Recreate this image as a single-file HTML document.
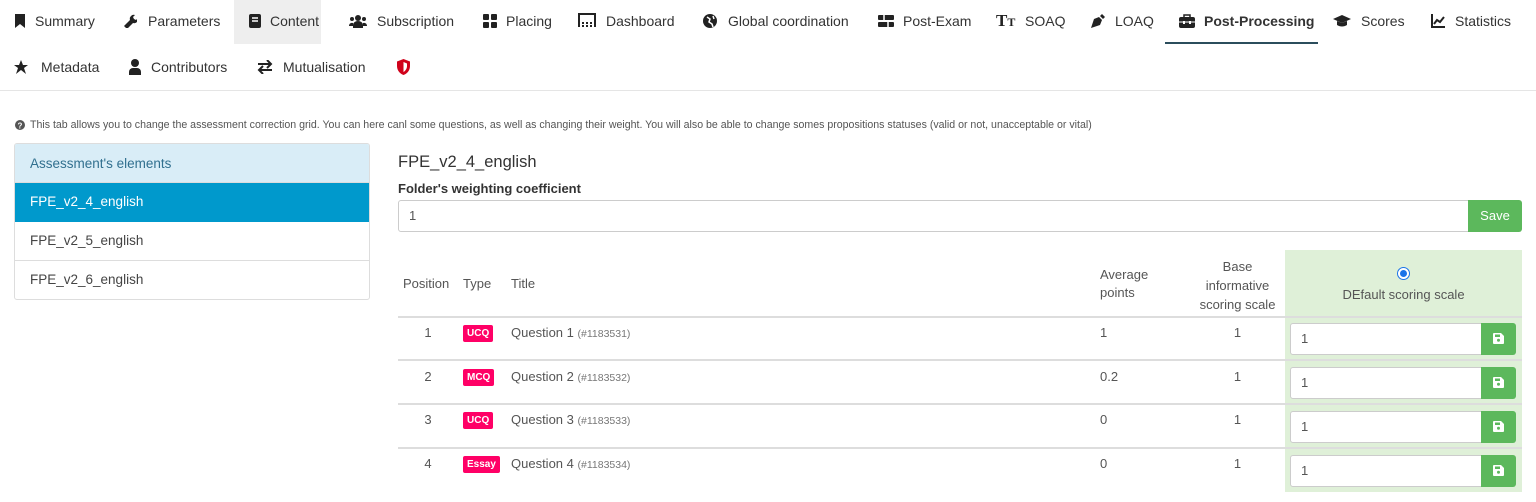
<!DOCTYPE html>
<html><head><meta charset="utf-8"><style>
*{box-sizing:border-box;margin:0;padding:0}
body{width:1536px;height:502px;overflow:hidden;background:#fff;font-family:"Liberation Sans",sans-serif;color:#333;font-size:14px;position:relative}
.a{position:absolute;white-space:nowrap}
.nav{color:#333;font-size:14px}
.ic{position:absolute;width:14px;height:14px}
.badge{position:absolute;background:#f06;color:#fff;font-size:10px;font-weight:bold;border-radius:2px;padding:2px 4px;line-height:13px}
.inp{position:absolute;border:1px solid #ccc;border-radius:3px;background:#fff;font-size:13px;color:#555;padding-left:10px}
.gb{position:absolute;background:#5cb85c;border-radius:0 3px 3px 0}
.hl{position:absolute;height:2px;background:#ddd;left:398px;width:1124px}
</style></head><body>
<div class="a" style="left:234px;top:0;width:87px;height:44px;background:#eee"></div>
<div class="a" style="left:1165px;top:42px;width:153px;height:2px;background:#2b4d5c"></div>
<div class="a" style="left:0;top:90px;width:1536px;height:1px;background:#e5e5e5"></div>
<svg class="ic" style="left:13px;top:14px" viewBox="0 0 14 14"><path d="M2 0h10v14l-5-4-5 4z" fill="#222"/></svg>
<div class="a nav" style="left:35px;top:13px">Summary</div>
<svg class="ic" style="left:123px;top:14px" viewBox="0 0 14 14"><path d="M1 12l6-6a4 4 0 015-5l-2 2 1 2 2 1 2-2a4 4 0 01-5 5l-6 6z" fill="#222"/></svg>
<div class="a nav" style="left:148px;top:13px">Parameters</div>
<svg class="ic" style="left:248px;top:14px" viewBox="0 0 14 14"><rect x="1" y="0" width="12" height="14" rx="2" fill="#222"/><path d="M4 4h6M4 7h6" stroke="#fff" stroke-width="1.5"/></svg>
<div class="a nav" style="left:270px;top:13px">Content</div>
<svg class="ic" style="left:349px;top:14px;width:18px" viewBox="0 0 18 14"><circle cx="9" cy="4" r="3" fill="#222"/><circle cx="3" cy="5" r="2" fill="#222"/><circle cx="15" cy="5" r="2" fill="#222"/><path d="M4 14v-3a5 4 0 0110 0v3zM0 12a3 3 0 014-3v3zM18 12a3 3 0 00-4-3v3z" fill="#222"/></svg>
<div class="a nav" style="left:377px;top:13px">Subscription</div>
<svg class="ic" style="left:483px;top:14px" viewBox="0 0 14 14"><rect x="0" y="0" width="6" height="6" rx="1" fill="#222"/><rect x="8" y="0" width="6" height="6" rx="1" fill="#222"/><rect x="0" y="8" width="6" height="6" rx="1" fill="#222"/><rect x="8" y="8" width="6" height="6" rx="1" fill="#222"/></svg>
<div class="a nav" style="left:506px;top:13px">Placing</div>
<svg class="ic" style="left:578px;top:13px;width:18px;height:16px" viewBox="0 0 18 16"><path d="M1 14V1h16v13" fill="none" stroke="#222" stroke-width="2"/><path d="M4 13h2M8 13h2M12 13h2M4 10h2M8 10h2M12 10h2" stroke="#222" stroke-width="2"/></svg>
<div class="a nav" style="left:606px;top:13px">Dashboard</div>
<svg class="ic" style="left:703px;top:14px" viewBox="0 0 14 14"><circle cx="7" cy="7" r="7" fill="#222"/><path d="M4 3l3 2-1 3 3 2 1 3M10 2l1 3" stroke="#fff" stroke-width="1.5" fill="none"/></svg>
<div class="a nav" style="left:728px;top:13px">Global coordination</div>
<svg class="ic" style="left:878px;top:14px;width:16px" viewBox="0 0 16 14"><rect x="0" y="1" width="16" height="5" rx="1" fill="#222"/><rect x="0" y="8" width="16" height="5" rx="1" fill="#222"/><path d="M6 1v5M10 8v5" stroke="#fff" stroke-width="1.5"/></svg>
<div class="a nav" style="left:903px;top:13px">Post-Exam</div>
<div class="a" style="left:996px;top:11px;font-family:'Liberation Serif',serif;font-size:17px;color:#222;font-weight:bold">T<span style="font-size:12px">T</span></div>
<div class="a nav" style="left:1025px;top:13px">SOAQ</div>
<svg class="ic" style="left:1090px;top:13px;width:16px;height:16px" viewBox="0 0 16 16"><path d="M1 15l3-9 5-2 3 3-2 5z" fill="#222"/><path d="M10 3l2-2 3 3-2 2z" fill="#222"/></svg>
<div class="a nav" style="left:1115px;top:13px">LOAQ</div>
<svg class="ic" style="left:1179px;top:14px;width:16px" viewBox="0 0 16 14"><path d="M5 3V1h6v2" stroke="#222" stroke-width="1.5" fill="none"/><rect x="0" y="3" width="16" height="11" rx="2" fill="#222"/><path d="M0 8h16" stroke="#fff"/><rect x="4" y="7" width="2" height="3" fill="#fff"/><rect x="10" y="7" width="2" height="3" fill="#fff"/></svg>
<div class="a nav" style="left:1204px;top:13px;font-weight:bold">Post-Processing</div>
<svg class="ic" style="left:1333px;top:14px;width:18px" viewBox="0 0 18 14"><path d="M0 5l9-4 9 4-9 4z" fill="#222"/><path d="M4 7v4c3 2 7 2 10 0V7l-5 2z" fill="#222"/></svg>
<div class="a nav" style="left:1361px;top:13px">Scores</div>
<svg class="ic" style="left:1431px;top:14px" viewBox="0 0 14 14"><path d="M1 0v13h13" stroke="#222" stroke-width="2" fill="none"/><path d="M3 10l3-4 3 2 4-5" stroke="#222" stroke-width="2" fill="none"/></svg>
<div class="a nav" style="left:1455px;top:13px">Statistics</div>
<svg class="ic" style="left:14px;top:60px" viewBox="0 0 14 14"><path d="M7 0l2 5h5l-4 3 2 6-5-4-5 4 2-6-4-3h5z" fill="#222"/></svg>
<div class="a nav" style="left:41px;top:59px">Metadata</div>
<svg class="ic" style="left:128px;top:59px;width:14px;height:16px" viewBox="0 0 14 16"><circle cx="7" cy="4" r="4" fill="#222"/><path d="M1 16v-3a4 4 0 014-4h4a4 4 0 014 4v3z" fill="#222"/></svg>
<div class="a nav" style="left:151px;top:59px">Contributors</div>
<svg class="ic" style="left:257px;top:60px;width:16px" viewBox="0 0 16 14"><path d="M1 4h13M10 0l4 4-4 4M15 10H2M6 6l-4 4 4 4" stroke="#222" stroke-width="2" fill="none"/></svg>
<div class="a nav" style="left:283px;top:59px">Mutualisation</div>
<svg class="ic" style="left:397px;top:59px;width:13px;height:16px" viewBox="0 0 13 16"><path d="M6.5 0L13 2.5V7c0 5-3.5 8-6.5 9C3.5 15 0 12 0 7V2.5z" fill="#d0021b"/><path d="M6.5 3L10 4.5V7c0 3-2 5-3.5 6z" fill="#fff"/></svg>
<svg class="ic" style="left:15px;top:120px;width:10px;height:10px" viewBox="0 0 10 10"><circle cx="5" cy="5" r="5" fill="#555"/><text x="5" y="8.3" font-size="8" fill="#fff" text-anchor="middle" font-family="Liberation Sans" font-weight="bold">?</text></svg>
<div class="a" style="left:30px;top:119px;font-size:10.6px;color:#555">This tab allows you to change the assessment correction grid. You can here canl some questions, as well as changing their weight. You will also be able to change somes propositions statuses (valid or not, unacceptable or vital)</div>
<div class="a" style="left:14px;top:143px;width:356px;height:157px;border:1px solid #ddd;border-radius:3px;overflow:hidden">
<div style="height:39px;background:#d9edf7;color:#31708f;padding:12px 15px;font-size:13.5px;border-bottom:1px solid #ddd">Assessment's elements</div>
<div style="height:39px;background:#0099cc;color:#fff;padding:11px 15px;font-size:13.5px">FPE_v2_4_english</div>
<div style="height:39px;color:#444;padding:11px 15px;font-size:13.5px;border-bottom:1px solid #ddd">FPE_v2_5_english</div>
<div style="height:39px;color:#444;padding:11px 15px;font-size:13.5px">FPE_v2_6_english</div>
</div>
<div class="a" style="left:398px;top:153px;font-size:16.5px;color:#333">FPE_v2_4_english</div>
<div class="a" style="left:398px;top:181px;font-size:13px;font-weight:bold;color:#333">Folder's weighting coefficient</div>
<div class="inp" style="left:398px;top:200px;width:1072px;height:32px;line-height:30px;border-radius:3px 0 0 3px">1</div>
<div class="gb" style="left:1468px;top:200px;width:54px;height:32px;color:#fff;font-size:13px;text-align:center;line-height:32px">Save</div>
<div class="a" style="left:1285px;top:250px;width:237px;height:242px;background:#dff0d8"></div>
<div class="a" style="left:403px;top:276px;font-size:13px;color:#555">Position</div>
<div class="a" style="left:463px;top:276px;font-size:13px;color:#555">Type</div>
<div class="a" style="left:511px;top:276px;font-size:13px;color:#555">Title</div>
<div class="a" style="left:1100px;top:266px;font-size:13px;color:#555;line-height:18px">Average<br>points</div>
<div class="a" style="left:1190px;top:257px;width:95px;text-align:center;font-size:13px;color:#555;line-height:19px">Base<br>informative<br>scoring scale</div>
<div class="a" style="left:1397px;top:267px;width:13px;height:13px;border-radius:50%;border:1px solid #1a73e8;background:#fff"><div style="width:7px;height:7px;border-radius:50%;background:#1a73e8;margin:2px"></div></div>
<div class="a" style="left:1285px;top:287px;width:237px;text-align:center;font-size:13px;color:#555">DEfault scoring scale</div>
<div class="hl" style="top:316px"></div>
<div class="hl" style="top:359px"></div>
<div class="hl" style="top:403px"></div>
<div class="hl" style="top:447px"></div>
<div class="a" style="left:398px;top:325px;width:60px;text-align:center;font-size:13px;color:#555">1</div>
<div class="badge" style="left:463px;top:325px">UCQ</div>
<div class="a" style="left:511px;top:325px;font-size:13px;color:#555">Question 1 <span style="font-size:10.5px;color:#777">(#1183531)</span></div>
<div class="a" style="left:1100px;top:325px;font-size:13px;color:#555">1</div>
<div class="a" style="left:1190px;top:325px;width:95px;text-align:center;font-size:13px;color:#555">1</div>
<div class="inp" style="left:1290px;top:323px;width:193px;height:32px;line-height:30px;border-radius:3px 0 0 3px">1</div>
<div class="gb" style="left:1481px;top:323px;width:35px;height:32px"><svg style="position:absolute;left:12px;top:10px" width="11" height="11" viewBox="0 0 11 11"><path d="M0 1a1 1 0 011-1h7l3 3v7a1 1 0 01-1 1H1a1 1 0 01-1-1z" fill="#fff"/><rect x="2" y="1.5" width="5" height="2.5" fill="#5cb85c"/><circle cx="5.5" cy="7.3" r="1.5" fill="#5cb85c"/></svg></div>
<div class="a" style="left:398px;top:369px;width:60px;text-align:center;font-size:13px;color:#555">2</div>
<div class="badge" style="left:463px;top:369px">MCQ</div>
<div class="a" style="left:511px;top:369px;font-size:13px;color:#555">Question 2 <span style="font-size:10.5px;color:#777">(#1183532)</span></div>
<div class="a" style="left:1100px;top:369px;font-size:13px;color:#555">0.2</div>
<div class="a" style="left:1190px;top:369px;width:95px;text-align:center;font-size:13px;color:#555">1</div>
<div class="inp" style="left:1290px;top:367px;width:193px;height:32px;line-height:30px;border-radius:3px 0 0 3px">1</div>
<div class="gb" style="left:1481px;top:367px;width:35px;height:32px"><svg style="position:absolute;left:12px;top:10px" width="11" height="11" viewBox="0 0 11 11"><path d="M0 1a1 1 0 011-1h7l3 3v7a1 1 0 01-1 1H1a1 1 0 01-1-1z" fill="#fff"/><rect x="2" y="1.5" width="5" height="2.5" fill="#5cb85c"/><circle cx="5.5" cy="7.3" r="1.5" fill="#5cb85c"/></svg></div>
<div class="a" style="left:398px;top:412px;width:60px;text-align:center;font-size:13px;color:#555">3</div>
<div class="badge" style="left:463px;top:412px">UCQ</div>
<div class="a" style="left:511px;top:412px;font-size:13px;color:#555">Question 3 <span style="font-size:10.5px;color:#777">(#1183533)</span></div>
<div class="a" style="left:1100px;top:412px;font-size:13px;color:#555">0</div>
<div class="a" style="left:1190px;top:412px;width:95px;text-align:center;font-size:13px;color:#555">1</div>
<div class="inp" style="left:1290px;top:411px;width:193px;height:32px;line-height:30px;border-radius:3px 0 0 3px">1</div>
<div class="gb" style="left:1481px;top:411px;width:35px;height:32px"><svg style="position:absolute;left:12px;top:10px" width="11" height="11" viewBox="0 0 11 11"><path d="M0 1a1 1 0 011-1h7l3 3v7a1 1 0 01-1 1H1a1 1 0 01-1-1z" fill="#fff"/><rect x="2" y="1.5" width="5" height="2.5" fill="#5cb85c"/><circle cx="5.5" cy="7.3" r="1.5" fill="#5cb85c"/></svg></div>
<div class="a" style="left:398px;top:456px;width:60px;text-align:center;font-size:13px;color:#555">4</div>
<div class="badge" style="left:463px;top:456px">Essay</div>
<div class="a" style="left:511px;top:456px;font-size:13px;color:#555">Question 4 <span style="font-size:10.5px;color:#777">(#1183534)</span></div>
<div class="a" style="left:1100px;top:456px;font-size:13px;color:#555">0</div>
<div class="a" style="left:1190px;top:456px;width:95px;text-align:center;font-size:13px;color:#555">1</div>
<div class="inp" style="left:1290px;top:455px;width:193px;height:32px;line-height:30px;border-radius:3px 0 0 3px">1</div>
<div class="gb" style="left:1481px;top:455px;width:35px;height:32px"><svg style="position:absolute;left:12px;top:10px" width="11" height="11" viewBox="0 0 11 11"><path d="M0 1a1 1 0 011-1h7l3 3v7a1 1 0 01-1 1H1a1 1 0 01-1-1z" fill="#fff"/><rect x="2" y="1.5" width="5" height="2.5" fill="#5cb85c"/><circle cx="5.5" cy="7.3" r="1.5" fill="#5cb85c"/></svg></div>
</body></html>
